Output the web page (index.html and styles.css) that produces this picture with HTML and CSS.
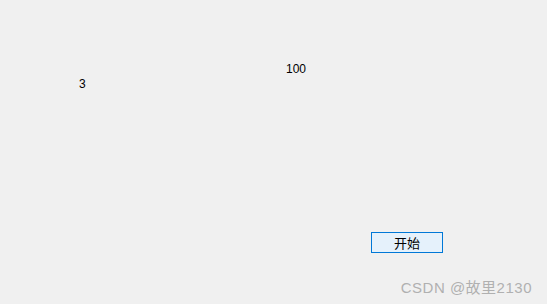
FILE: index.html
```html
<!DOCTYPE html>
<html>
<head>
<meta charset="utf-8">
<link rel="stylesheet" href="styles.css">
</head>
<body>
<div class="form">
  <div class="label label-count">100</div>
  <div class="label label-small">3</div>
  <div class="actions">
    <button class="btn-start">开始</button>
  </div>
  <div class="watermark">CSDN @故里2130</div>
</div>
</body>
</html>
```
FILE: styles.css
```css
html, body {
  margin: 0;
  padding: 0;
  background: #f0f0f0;
}
.form {
  width: 547px;
  height: 304px;
  box-sizing: border-box;
  padding-top: 62px;
  font-family: "Liberation Sans", "Noto Sans CJK SC", sans-serif;
  color: #000;
  overflow: hidden;
}
.label {
  font-size: 12px;
  line-height: 15px;
  height: 15px;
}
.label-count {
  margin-left: 286px;
}
.label-small {
  margin-left: 79px;
}
.actions {
  margin-top: 140px;
  padding-left: 371px;
  display: flex;
}
.btn-start {
  width: 72px;
  height: 21px;
  box-sizing: border-box;
  margin: 0;
  padding: 0;
  border: 1px solid #0078d7;
  background: #e5f1fb;
  color: #000;
  font-family: "Noto Sans CJK SC", sans-serif;
  font-size: 13px;
  line-height: 19px;
}
.watermark {
  margin-top: 26px;
  display: flex;
  justify-content: flex-end;
  padding-right: 15px;
  font-size: 15px;
  line-height: 18px;
  letter-spacing: 0.5px;
  color: #b0b0b0;
  font-family: "Liberation Sans", "Noto Sans CJK SC", sans-serif;
}
```
